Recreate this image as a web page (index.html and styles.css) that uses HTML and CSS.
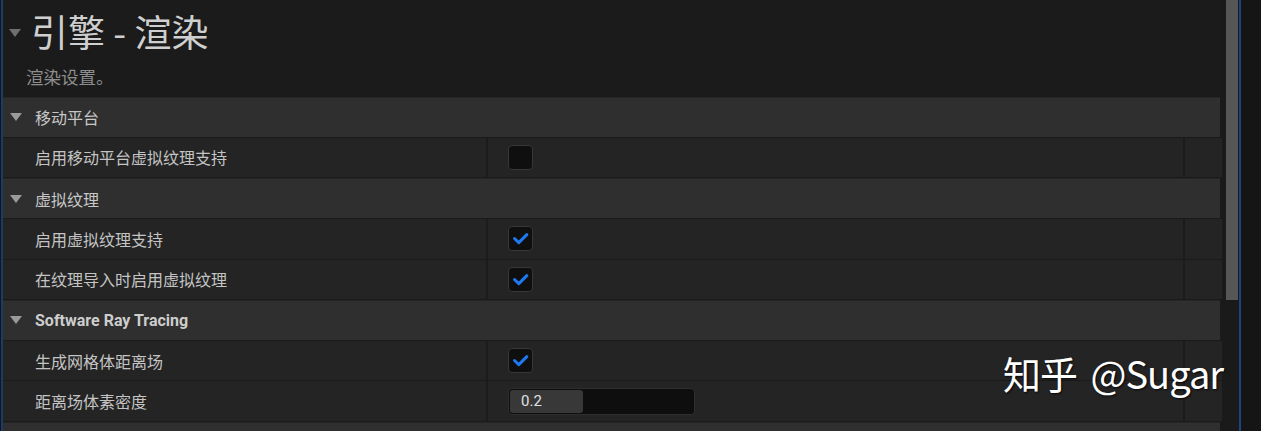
FILE: index.html
```html
<!DOCTYPE html>
<html lang="zh">
<head>
<meta charset="utf-8">
<title>引擎 - 渲染</title>
<link rel="stylesheet" href="styles.css">
</head>
<body>
<div class="frame">
  <div class="panel">
    <div class="content">
      <div class="title-area">
        <div class="title-line">
          <span class="tri tri-title"></span>
          <h1 class="title">引擎 - 渲染</h1>
        </div>
        <p class="subtitle">渲染设置。</p>
      </div>

      <div class="row cat">
        <span class="tri"></span><span class="cat-label">移动平台</span>
      </div>
      <div class="row prop">
        <div class="name">启用移动平台虚拟纹理支持</div>
        <div class="value"><span class="checkbox"></span></div>
        <div class="extra"></div>
      </div>

      <div class="row cat">
        <span class="tri"></span><span class="cat-label">虚拟纹理</span>
      </div>
      <div class="row prop">
        <div class="name">启用虚拟纹理支持</div>
        <div class="value"><span class="checkbox checked"><svg viewBox="0 0 25 25" width="25" height="25"><path d="M6.5 12.5 L10.8 16.6 L18.8 8.6" fill="none" stroke="#1f78f0" stroke-width="3" stroke-linecap="round" stroke-linejoin="round"/></svg></span></div>
        <div class="extra"></div>
      </div>
      <div class="row prop">
        <div class="name">在纹理导入时启用虚拟纹理</div>
        <div class="value"><span class="checkbox checked"><svg viewBox="0 0 25 25" width="25" height="25"><path d="M6.5 12.5 L10.8 16.6 L18.8 8.6" fill="none" stroke="#1f78f0" stroke-width="3" stroke-linecap="round" stroke-linejoin="round"/></svg></span></div>
        <div class="extra"></div>
      </div>

      <div class="row cat">
        <span class="tri"></span><span class="cat-label latin">Software Ray Tracing</span>
      </div>
      <div class="row prop">
        <div class="name">生成网格体距离场</div>
        <div class="value"><span class="checkbox checked"><svg viewBox="0 0 25 25" width="25" height="25"><path d="M6.5 12.5 L10.8 16.6 L18.8 8.6" fill="none" stroke="#1f78f0" stroke-width="3" stroke-linecap="round" stroke-linejoin="round"/></svg></span></div>
        <div class="extra"></div>
      </div>
      <div class="row prop">
        <div class="name">距离场体素密度</div>
        <div class="value">
          <div class="numbox">
            <div class="numfill" style="width: 40%">0.2</div>
          </div>
        </div>
        <div class="extra"></div>
      </div>
      <div class="row cat"></div>
    </div>
    <div class="scrolltrack"><div class="thumb"></div></div>
  </div>
  <div class="outside"></div>
  <div class="watermark">知乎 @Sugar</div>
</div>
</body>
</html>
```

FILE: styles.css
```css
html, body {
  margin: 0;
  padding: 0;
  height: 100%;
  overflow: hidden;
  background: #151515;
}

body {
  font-family: "Roboto", "Noto Sans CJK SC", sans-serif;
  color: #c4c4c4;
}

.frame {
  position: relative;
  display: flex;
  width: 1261px;
  height: 431px;
  padding-left: 1px;
  box-sizing: border-box;
  overflow: hidden;
}

.panel {
  display: flex;
  width: 1240px;
  height: 431px;
  border-left: 2px solid #1d3b69;
  border-right: 2px solid #1f4280;
  background: #1a1a1a;
  box-sizing: border-box;
  overflow: hidden;
}

.content {
  width: 1219px;
  display: flex;
  flex-direction: column;
  overflow: hidden;
}

.title-area {
  height: 97px;
  flex-shrink: 0;
  background: #1b1b1b;
  box-sizing: border-box;
  padding-top: 6px;
}

.title-line {
  display: flex;
  align-items: center;
  height: 50px;
}

.title {
  margin: 0 0 0 10px;
  font-family: "Noto Sans CJK SC", sans-serif;
  font-weight: 400;
  font-size: 37px;
  line-height: 50px;
  color: #cfcfcf;
}

.subtitle {
  margin: 9px 0 0 23px;
  font-family: "Noto Sans CJK SC", sans-serif;
  font-size: 17.5px;
  line-height: 24px;
  color: #8d8d8d;
}

.tri {
  display: inline-block;
  width: 0;
  height: 0;
  border-left: 6px solid transparent;
  border-right: 6px solid transparent;
  border-top: 8px solid #9a9a9a;
  margin-left: 7px;
  margin-right: 13px;
}

.tri-title {
  border-top-color: #6e6e6e;
  margin-top: 4px;
  margin-right: 0;
  margin-left: 6px;
}

.row {
  height: 40.625px;
  box-sizing: border-box;
  border-bottom: 1px solid #1a1a1a;
  display: flex;
  align-items: center;
  font-size: 16px;
  flex-shrink: 0;
}

.cat {
  background: #2f2f2f;
  width: 1217px;
  border-top: 1px solid #262626;
}

.cat-label {
  font-family: "Noto Sans CJK SC", sans-serif;
  color: #c8c8c8;
}

.cat-label.latin {
  font-family: "Roboto", sans-serif;
  font-weight: 700;
  font-size: 16px;
  color: #cdcdcd;
}

.prop {
  background: #242424;
  align-items: stretch;
  width: 1219px;
}

.name {
  width: 485px;
  padding-left: 32px;
  box-sizing: border-box;
  display: flex;
  align-items: center;
  font-family: "Noto Sans CJK SC", sans-serif;
  color: #c4c4c4;
  border-right: 2px solid #1c1c1c;
}

.value {
  width: 697px;
  box-sizing: border-box;
  padding-left: 20px;
  display: flex;
  align-items: center;
  border-right: 2px solid #1c1c1c;
}

.extra {
  flex: 1;
}

.checkbox {
  display: block;
  width: 25px;
  height: 25px;
  box-sizing: border-box;
  background: #0f0f0f;
  border: 1px solid #373737;
  border-radius: 4px;
  position: relative;
}

.checkbox svg {
  position: absolute;
  left: -1px;
  top: -1px;
}

.numbox {
  width: 187px;
  height: 27px;
  box-sizing: border-box;
  background: #0e0e0e;
  border: 1px solid #2e2e2e;
  border-radius: 4px;
  padding: 1px;
  display: flex;
}

.numfill {
  background: #383838;
  border-radius: 3px;
  font-family: "Roboto", sans-serif;
  font-size: 15px;
  color: #e0e0e0;
  padding-left: 11px;
  display: flex;
  align-items: center;
  box-sizing: border-box;
}

.scrolltrack {
  margin-left: 4px;
  width: 12px;
}

.thumb {
  height: 300px;
  background: #565656;
}

.outside {
  flex: 1;
  background: #151515;
}

.watermark {
  position: absolute;
  left: 1003px;
  top: 346px;
  font-family: "Noto Sans CJK SC", sans-serif;
  font-size: 38px;
  line-height: 54px;
  letter-spacing: -1px;
  word-spacing: 6px;
  color: #ffffff;
  text-shadow: 1px 1px 2px rgba(0,0,0,0.8);
  white-space: nowrap;
}
```
